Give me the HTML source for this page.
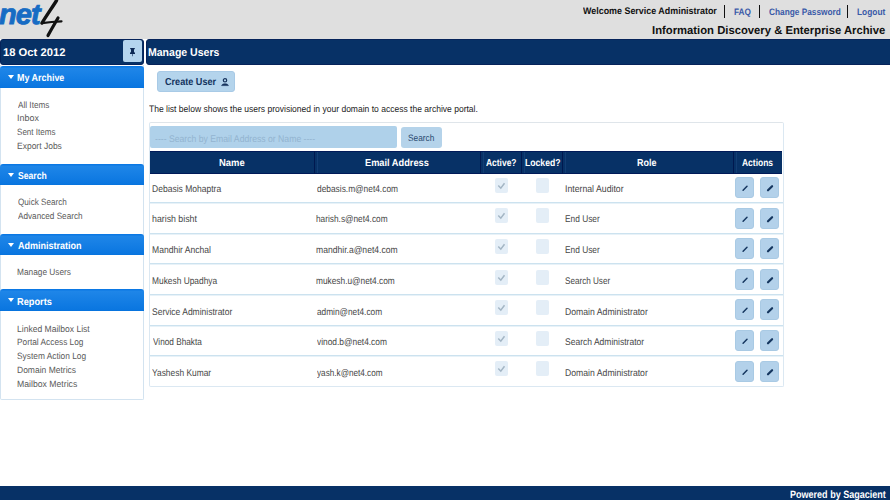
<!DOCTYPE html>
<html><head><meta charset="utf-8">
<style>
*{margin:0;padding:0;box-sizing:border-box}
html,body{width:890px;height:500px;overflow:hidden;background:#fff;font-family:"Liberation Sans",sans-serif;position:relative;text-rendering:geometricPrecision}
.a{position:absolute}
.t{position:absolute;white-space:nowrap;transform-origin:0 0}
</style></head><body>
<div class="a" style="left:0;top:0;width:890px;height:39px;background:#dfdfdf"></div>
<svg class="a" style="left:0;top:0" width="70" height="39" viewBox="0 0 70 39">
<text x="-1" y="24" font-family="Liberation Sans" font-weight="bold" font-style="italic" font-size="29" fill="#176cc4" stroke="#176cc4" stroke-width="0.9" letter-spacing="-0.9">net</text>
<path d="M56.5,0.5 C52.5,7 46.5,15.5 42,23" stroke="#111" stroke-width="3.4" fill="none" stroke-linecap="round"/>
<path d="M42,23.2 C48,22.2 55,21.5 61.5,21.3" stroke="#111" stroke-width="2.2" fill="none" stroke-linecap="round"/>
<path d="M58,18 C54.5,24 51,30 48,35.5" stroke="#111" stroke-width="3.2" fill="none" stroke-linecap="round"/>
</svg>
<div class="a" style="left:724px;top:5px;width:1px;height:13px;background:#111"></div>
<div class="a" style="left:759px;top:5px;width:1px;height:13px;background:#111"></div>
<div class="a" style="left:847px;top:5px;width:1px;height:13px;background:#111"></div>
<div class="a" style="left:0;top:39px;width:144px;height:25.5px;background:#073166;border:1px solid #06235a;border-radius:3px"></div>
<div class="a" style="left:123px;top:40px;width:19px;height:22px;background:#b4d5ee;border-radius:2px"></div>
<svg class="a" style="left:129px;top:47px" width="7" height="10" viewBox="0 0 7 10"><path d="M1.2,1 h4.6 v1.2 h-0.8 v2.6 l1,1.1 v1 h-2.2 v2.4 h-0.6 v-2.4 h-2.2 v-1 l1,-1.1 v-2.6 h-0.8z" fill="#0d2a55"/></svg>
<div class="a" style="left:146px;top:39px;width:750px;height:26px;background:#073166;border:1px solid #06235a;border-radius:3px"></div>
<div class="a" style="left:0;top:65px;width:144px;height:335px;border:1px solid #d3e3f0;border-top:none;border-radius:0 0 2px 2px"></div>
<div class="a" style="left:0;top:66px;width:144px;height:21.5px;background:linear-gradient(#0b78e4 0,#0b78e4 1px,#1f86e8 2px,#0a76e0 95%,#0672dc);border-radius:3px 3px 0 0"></div>
<div class="a" style="left:7.5px;top:75px;width:0;height:0;border-left:3px solid transparent;border-right:3px solid transparent;border-top:4px solid #fff"></div>
<div class="a" style="left:0;top:164px;width:144px;height:21px;background:linear-gradient(#0b78e4 0,#0b78e4 1px,#1f86e8 2px,#0a76e0 95%,#0672dc);border-radius:3px 3px 0 0"></div>
<div class="a" style="left:7.5px;top:173px;width:0;height:0;border-left:3px solid transparent;border-right:3px solid transparent;border-top:4px solid #fff"></div>
<div class="a" style="left:0;top:234px;width:144px;height:21px;background:linear-gradient(#0b78e4 0,#0b78e4 1px,#1f86e8 2px,#0a76e0 95%,#0672dc);border-radius:3px 3px 0 0"></div>
<div class="a" style="left:7.5px;top:243px;width:0;height:0;border-left:3px solid transparent;border-right:3px solid transparent;border-top:4px solid #fff"></div>
<div class="a" style="left:0;top:289px;width:144px;height:22px;background:linear-gradient(#0b78e4 0,#0b78e4 1px,#1f86e8 2px,#0a76e0 95%,#0672dc);border-radius:3px 3px 0 0"></div>
<div class="a" style="left:7.5px;top:298px;width:0;height:0;border-left:3px solid transparent;border-right:3px solid transparent;border-top:4px solid #fff"></div>
<div class="a" style="left:157px;top:71px;width:78px;height:21px;background:#b4d4ec;border:1px solid #a8cae6;border-radius:3px"></div>
<svg class="a" style="left:220px;top:77px" width="10" height="10" viewBox="0 0 10 10"><circle cx="5" cy="3.3" r="1.7" fill="none" stroke="#16325c" stroke-width="1.2"/><path d="M1.6,8.6 C2,6.2 8,6.2 8.4,8.6 Z" fill="#16325c" stroke="#16325c" stroke-width="0.6"/></svg>
<div class="a" style="left:149px;top:122px;width:635px;height:265px;border:1px solid #dbe8f2;border-top-color:#dfe5ea;border-radius:2px"></div>
<div class="a" style="left:150px;top:126px;width:247px;height:22px;background:#afd1ea;border-radius:2px"></div>
<div class="a" style="left:401px;top:127px;width:41px;height:21px;background:#b5d3ea;border-radius:3px"></div>
<div class="a" style="left:150px;top:151px;width:632px;height:23px;background:#073166;border-top:1px solid #001a58;border-bottom:1px solid #001a58"></div>
<div class="a" style="left:314px;top:151px;width:1px;height:23px;background:#00184f"></div>
<div class="a" style="left:317px;top:152px;width:1px;height:21px;background:#123d74"></div>
<div class="a" style="left:480px;top:151px;width:1px;height:23px;background:#00184f"></div>
<div class="a" style="left:483px;top:152px;width:1px;height:21px;background:#123d74"></div>
<div class="a" style="left:521px;top:151px;width:1px;height:23px;background:#00184f"></div>
<div class="a" style="left:524px;top:152px;width:1px;height:21px;background:#123d74"></div>
<div class="a" style="left:562px;top:151px;width:1px;height:23px;background:#00184f"></div>
<div class="a" style="left:565px;top:152px;width:1px;height:21px;background:#123d74"></div>
<div class="a" style="left:733px;top:151px;width:1px;height:23px;background:#00184f"></div>
<div class="a" style="left:736px;top:152px;width:1px;height:21px;background:#123d74"></div>
<div class="a" style="left:150px;top:202px;width:633px;height:1px;background:#cce2ef"></div>
<div class="a" style="left:150px;top:203px;width:633px;height:1px;background:#e8f2f8"></div>
<div class="a" style="left:150px;top:233px;width:633px;height:1px;background:#cce2ef"></div>
<div class="a" style="left:150px;top:234px;width:633px;height:1px;background:#e8f2f8"></div>
<div class="a" style="left:150px;top:263px;width:633px;height:1px;background:#cce2ef"></div>
<div class="a" style="left:150px;top:264px;width:633px;height:1px;background:#e8f2f8"></div>
<div class="a" style="left:150px;top:294px;width:633px;height:1px;background:#cce2ef"></div>
<div class="a" style="left:150px;top:295px;width:633px;height:1px;background:#e8f2f8"></div>
<div class="a" style="left:150px;top:325px;width:633px;height:1px;background:#cce2ef"></div>
<div class="a" style="left:150px;top:326px;width:633px;height:1px;background:#e8f2f8"></div>
<div class="a" style="left:150px;top:355px;width:633px;height:1px;background:#cce2ef"></div>
<div class="a" style="left:150px;top:356px;width:633px;height:1px;background:#e8f2f8"></div>
<div class="a" style="left:495px;top:178px;width:13px;height:15px;background:#e4eef7;border-radius:2px"></div>
<svg class="a" style="left:495px;top:178px" width="13" height="15" viewBox="0 0 13 15"><path d="M3.3,7.6 L5.8,10.2 L9.5,5.3" stroke="#a3b5c4" stroke-width="1.5" fill="none"/></svg>
<div class="a" style="left:536px;top:178px;width:13px;height:15px;background:#e4eef7;border-radius:2px"></div>
<div class="a" style="left:735px;top:177px;width:19px;height:21px;background:#b3d1ea;border:1px solid #a9cae4;border-radius:3px"></div>
<div class="a" style="left:760px;top:177px;width:19px;height:21px;background:#b3d1ea;border:1px solid #a9cae4;border-radius:3px"></div>
<svg class="a" style="left:735px;top:177px" width="19" height="21" viewBox="0 0 19 21"><path d="M8.1,13.2 L12,9.3" stroke="#15365f" stroke-width="1.5" stroke-linecap="round"/></svg>
<svg class="a" style="left:760px;top:177px" width="19" height="21" viewBox="0 0 19 21"><path d="M8,13.3 L12.1,9.2" stroke="#15365f" stroke-width="2.2" stroke-linecap="round"/></svg>
<div class="a" style="left:495px;top:208px;width:13px;height:15px;background:#e4eef7;border-radius:2px"></div>
<svg class="a" style="left:495px;top:208px" width="13" height="15" viewBox="0 0 13 15"><path d="M3.3,7.6 L5.8,10.2 L9.5,5.3" stroke="#a3b5c4" stroke-width="1.5" fill="none"/></svg>
<div class="a" style="left:536px;top:208px;width:13px;height:15px;background:#e4eef7;border-radius:2px"></div>
<div class="a" style="left:735px;top:208px;width:19px;height:21px;background:#b3d1ea;border:1px solid #a9cae4;border-radius:3px"></div>
<div class="a" style="left:760px;top:208px;width:19px;height:21px;background:#b3d1ea;border:1px solid #a9cae4;border-radius:3px"></div>
<svg class="a" style="left:735px;top:208px" width="19" height="21" viewBox="0 0 19 21"><path d="M8.1,13.2 L12,9.3" stroke="#15365f" stroke-width="1.5" stroke-linecap="round"/></svg>
<svg class="a" style="left:760px;top:208px" width="19" height="21" viewBox="0 0 19 21"><path d="M8,13.3 L12.1,9.2" stroke="#15365f" stroke-width="2.2" stroke-linecap="round"/></svg>
<div class="a" style="left:495px;top:239px;width:13px;height:15px;background:#e4eef7;border-radius:2px"></div>
<svg class="a" style="left:495px;top:239px" width="13" height="15" viewBox="0 0 13 15"><path d="M3.3,7.6 L5.8,10.2 L9.5,5.3" stroke="#a3b5c4" stroke-width="1.5" fill="none"/></svg>
<div class="a" style="left:536px;top:239px;width:13px;height:15px;background:#e4eef7;border-radius:2px"></div>
<div class="a" style="left:735px;top:238px;width:19px;height:21px;background:#b3d1ea;border:1px solid #a9cae4;border-radius:3px"></div>
<div class="a" style="left:760px;top:238px;width:19px;height:21px;background:#b3d1ea;border:1px solid #a9cae4;border-radius:3px"></div>
<svg class="a" style="left:735px;top:238px" width="19" height="21" viewBox="0 0 19 21"><path d="M8.1,13.2 L12,9.3" stroke="#15365f" stroke-width="1.5" stroke-linecap="round"/></svg>
<svg class="a" style="left:760px;top:238px" width="19" height="21" viewBox="0 0 19 21"><path d="M8,13.3 L12.1,9.2" stroke="#15365f" stroke-width="2.2" stroke-linecap="round"/></svg>
<div class="a" style="left:495px;top:270px;width:13px;height:15px;background:#e4eef7;border-radius:2px"></div>
<svg class="a" style="left:495px;top:270px" width="13" height="15" viewBox="0 0 13 15"><path d="M3.3,7.6 L5.8,10.2 L9.5,5.3" stroke="#a3b5c4" stroke-width="1.5" fill="none"/></svg>
<div class="a" style="left:536px;top:270px;width:13px;height:15px;background:#e4eef7;border-radius:2px"></div>
<div class="a" style="left:735px;top:269px;width:19px;height:21px;background:#b3d1ea;border:1px solid #a9cae4;border-radius:3px"></div>
<div class="a" style="left:760px;top:269px;width:19px;height:21px;background:#b3d1ea;border:1px solid #a9cae4;border-radius:3px"></div>
<svg class="a" style="left:735px;top:269px" width="19" height="21" viewBox="0 0 19 21"><path d="M8.1,13.2 L12,9.3" stroke="#15365f" stroke-width="1.5" stroke-linecap="round"/></svg>
<svg class="a" style="left:760px;top:269px" width="19" height="21" viewBox="0 0 19 21"><path d="M8,13.3 L12.1,9.2" stroke="#15365f" stroke-width="2.2" stroke-linecap="round"/></svg>
<div class="a" style="left:495px;top:300px;width:13px;height:15px;background:#e4eef7;border-radius:2px"></div>
<svg class="a" style="left:495px;top:300px" width="13" height="15" viewBox="0 0 13 15"><path d="M3.3,7.6 L5.8,10.2 L9.5,5.3" stroke="#a3b5c4" stroke-width="1.5" fill="none"/></svg>
<div class="a" style="left:536px;top:300px;width:13px;height:15px;background:#e4eef7;border-radius:2px"></div>
<div class="a" style="left:735px;top:299px;width:19px;height:21px;background:#b3d1ea;border:1px solid #a9cae4;border-radius:3px"></div>
<div class="a" style="left:760px;top:299px;width:19px;height:21px;background:#b3d1ea;border:1px solid #a9cae4;border-radius:3px"></div>
<svg class="a" style="left:735px;top:299px" width="19" height="21" viewBox="0 0 19 21"><path d="M8.1,13.2 L12,9.3" stroke="#15365f" stroke-width="1.5" stroke-linecap="round"/></svg>
<svg class="a" style="left:760px;top:299px" width="19" height="21" viewBox="0 0 19 21"><path d="M8,13.3 L12.1,9.2" stroke="#15365f" stroke-width="2.2" stroke-linecap="round"/></svg>
<div class="a" style="left:495px;top:331px;width:13px;height:15px;background:#e4eef7;border-radius:2px"></div>
<svg class="a" style="left:495px;top:331px" width="13" height="15" viewBox="0 0 13 15"><path d="M3.3,7.6 L5.8,10.2 L9.5,5.3" stroke="#a3b5c4" stroke-width="1.5" fill="none"/></svg>
<div class="a" style="left:536px;top:331px;width:13px;height:15px;background:#e4eef7;border-radius:2px"></div>
<div class="a" style="left:735px;top:330px;width:19px;height:21px;background:#b3d1ea;border:1px solid #a9cae4;border-radius:3px"></div>
<div class="a" style="left:760px;top:330px;width:19px;height:21px;background:#b3d1ea;border:1px solid #a9cae4;border-radius:3px"></div>
<svg class="a" style="left:735px;top:330px" width="19" height="21" viewBox="0 0 19 21"><path d="M8.1,13.2 L12,9.3" stroke="#15365f" stroke-width="1.5" stroke-linecap="round"/></svg>
<svg class="a" style="left:760px;top:330px" width="19" height="21" viewBox="0 0 19 21"><path d="M8,13.3 L12.1,9.2" stroke="#15365f" stroke-width="2.2" stroke-linecap="round"/></svg>
<div class="a" style="left:495px;top:361px;width:13px;height:15px;background:#e4eef7;border-radius:2px"></div>
<svg class="a" style="left:495px;top:361px" width="13" height="15" viewBox="0 0 13 15"><path d="M3.3,7.6 L5.8,10.2 L9.5,5.3" stroke="#a3b5c4" stroke-width="1.5" fill="none"/></svg>
<div class="a" style="left:536px;top:361px;width:13px;height:15px;background:#e4eef7;border-radius:2px"></div>
<div class="a" style="left:735px;top:361px;width:19px;height:21px;background:#b3d1ea;border:1px solid #a9cae4;border-radius:3px"></div>
<div class="a" style="left:760px;top:361px;width:19px;height:21px;background:#b3d1ea;border:1px solid #a9cae4;border-radius:3px"></div>
<svg class="a" style="left:735px;top:361px" width="19" height="21" viewBox="0 0 19 21"><path d="M8.1,13.2 L12,9.3" stroke="#15365f" stroke-width="1.5" stroke-linecap="round"/></svg>
<svg class="a" style="left:760px;top:361px" width="19" height="21" viewBox="0 0 19 21"><path d="M8,13.3 L12.1,9.2" stroke="#15365f" stroke-width="2.2" stroke-linecap="round"/></svg>
<div class="a" style="left:0;top:486px;width:890px;height:14px;background:#073166"></div>
<div class="t" style="left:583.00px;top:7px;font-size:9.59px;line-height:9.59px;font-weight:bold;color:#111;transform:scaleX(0.931)">Welcome Service Administrator</div>
<div class="t" style="left:734.11px;top:8px;font-size:9.3px;line-height:9.3px;font-weight:bold;color:#3a5aa8;transform:scaleX(0.889)">FAQ</div>
<div class="t" style="left:768.70px;top:8px;font-size:9.3px;line-height:9.3px;font-weight:bold;color:#3a5aa8;transform:scaleX(0.891)">Change Password</div>
<div class="t" style="left:857.10px;top:8px;font-size:9.3px;line-height:9.3px;font-weight:bold;color:#3a5aa8;transform:scaleX(0.897)">Logout</div>
<div class="t" style="left:652.22px;top:26px;font-size:11.48px;line-height:11.48px;font-weight:bold;color:#111;transform:scaleX(0.983)">Information Discovery &amp; Enterprise Archive</div>
<div class="t" style="left:2.50px;top:48px;font-size:11.19px;line-height:11.19px;font-weight:bold;color:#fff;transform:scaleX(1.003)">18 Oct 2012</div>
<div class="t" style="left:147.66px;top:48px;font-size:11.19px;line-height:11.19px;font-weight:bold;color:#fff;transform:scaleX(0.941)">Manage Users</div>
<div class="t" style="left:17.41px;top:74px;font-size:10.03px;line-height:10.03px;font-weight:bold;color:#fff;transform:scaleX(0.892)">My Archive</div>
<div class="t" style="left:18.30px;top:172px;font-size:10.03px;line-height:10.03px;font-weight:bold;color:#fff;transform:scaleX(0.858)">Search</div>
<div class="t" style="left:18.30px;top:242px;font-size:10.03px;line-height:10.03px;font-weight:bold;color:#fff;transform:scaleX(0.900)">Administration</div>
<div class="t" style="left:17.38px;top:298px;font-size:10.03px;line-height:10.03px;font-weight:bold;color:#fff;transform:scaleX(0.922)">Reports</div>
<div class="t" style="left:18.30px;top:101px;font-size:9.16px;line-height:9.16px;font-weight:normal;color:#5a5a5a;transform:scaleX(0.894)">All Items</div>
<div class="t" style="left:17.32px;top:114px;font-size:9.16px;line-height:9.16px;font-weight:normal;color:#5a5a5a;transform:scaleX(0.976)">Inbox</div>
<div class="t" style="left:17.42px;top:128px;font-size:9.16px;line-height:9.16px;font-weight:normal;color:#5a5a5a;transform:scaleX(0.881)">Sent Items</div>
<div class="t" style="left:17.37px;top:142px;font-size:9.16px;line-height:9.16px;font-weight:normal;color:#5a5a5a;transform:scaleX(0.928)">Export Jobs</div>
<div class="t" style="left:18.30px;top:198px;font-size:9.16px;line-height:9.16px;font-weight:normal;color:#5a5a5a;transform:scaleX(0.889)">Quick Search</div>
<div class="t" style="left:18.30px;top:212px;font-size:9.16px;line-height:9.16px;font-weight:normal;color:#5a5a5a;transform:scaleX(0.893)">Advanced Search</div>
<div class="t" style="left:17.39px;top:268px;font-size:9.16px;line-height:9.16px;font-weight:normal;color:#5a5a5a;transform:scaleX(0.907)">Manage Users</div>
<div class="t" style="left:17.37px;top:325px;font-size:9.16px;line-height:9.16px;font-weight:normal;color:#5a5a5a;transform:scaleX(0.934)">Linked Mailbox List</div>
<div class="t" style="left:17.39px;top:338px;font-size:9.16px;line-height:9.16px;font-weight:normal;color:#5a5a5a;transform:scaleX(0.907)">Portal Access Log</div>
<div class="t" style="left:17.39px;top:352px;font-size:9.16px;line-height:9.16px;font-weight:normal;color:#5a5a5a;transform:scaleX(0.912)">System Action Log</div>
<div class="t" style="left:17.37px;top:366px;font-size:9.16px;line-height:9.16px;font-weight:normal;color:#5a5a5a;transform:scaleX(0.929)">Domain Metrics</div>
<div class="t" style="left:17.35px;top:380px;font-size:9.16px;line-height:9.16px;font-weight:normal;color:#5a5a5a;transform:scaleX(0.947)">Mailbox Metrics</div>
<div class="t" style="left:165.20px;top:78px;font-size:10.17px;line-height:10.17px;font-weight:bold;color:#13335e;transform:scaleX(0.896)">Create User</div>
<div class="t" style="left:148.78px;top:105px;font-size:9.3px;line-height:9.3px;font-weight:normal;color:#222;transform:scaleX(0.917)">The list below shows the users provisioned in your domain to access the archive portal.</div>
<div class="t" style="left:155.00px;top:135px;font-size:9.74px;line-height:9.74px;font-weight:normal;color:#93b4d0;transform:scaleX(0.889)">---- Search by Email Address or Name ----</div>
<div class="t" style="left:407.91px;top:134px;font-size:9.3px;line-height:9.3px;font-weight:normal;color:#2a4a70;transform:scaleX(0.893)">Search</div>
<div class="t" style="left:218.76px;top:159px;font-size:10.03px;line-height:10.03px;font-weight:bold;color:#fff;transform:scaleX(0.942)">Name</div>
<div class="t" style="left:364.78px;top:159px;font-size:10.03px;line-height:10.03px;font-weight:bold;color:#fff;transform:scaleX(0.922)">Email Address</div>
<div class="t" style="left:486.00px;top:159px;font-size:10.03px;line-height:10.03px;font-weight:bold;color:#fff;transform:scaleX(0.844)">Active?</div>
<div class="t" style="left:524.64px;top:159px;font-size:10.03px;line-height:10.03px;font-weight:bold;color:#fff;transform:scaleX(0.863)">Locked?</div>
<div class="t" style="left:637.40px;top:159px;font-size:10.03px;line-height:10.03px;font-weight:bold;color:#fff;transform:scaleX(0.895)">Role</div>
<div class="t" style="left:741.70px;top:159px;font-size:10.03px;line-height:10.03px;font-weight:bold;color:#fff;transform:scaleX(0.846)">Actions</div>
<div class="t" style="left:152.12px;top:185px;font-size:9.74px;line-height:9.74px;font-weight:normal;color:#474747;transform:scaleX(0.876)">Debasis Mohaptra</div>
<div class="t" style="left:317.30px;top:185px;font-size:9.74px;line-height:9.74px;font-weight:normal;color:#474747;transform:scaleX(0.859)">debasis.m@net4.com</div>
<div class="t" style="left:565.30px;top:185px;font-size:9.74px;line-height:9.74px;font-weight:normal;color:#474747;transform:scaleX(0.895)">Internal Auditor</div>
<div class="t" style="left:152.10px;top:215px;font-size:9.74px;line-height:9.74px;font-weight:normal;color:#474747;transform:scaleX(0.902)">harish bisht</div>
<div class="t" style="left:316.45px;top:215px;font-size:9.74px;line-height:9.74px;font-weight:normal;color:#474747;transform:scaleX(0.852)">harish.s@net4.com</div>
<div class="t" style="left:565.34px;top:215px;font-size:9.74px;line-height:9.74px;font-weight:normal;color:#474747;transform:scaleX(0.856)">End User</div>
<div class="t" style="left:152.12px;top:246px;font-size:9.74px;line-height:9.74px;font-weight:normal;color:#474747;transform:scaleX(0.879)">Mandhir Anchal</div>
<div class="t" style="left:316.42px;top:246px;font-size:9.74px;line-height:9.74px;font-weight:normal;color:#474747;transform:scaleX(0.881)">mandhir.a@net4.com</div>
<div class="t" style="left:565.34px;top:246px;font-size:9.74px;line-height:9.74px;font-weight:normal;color:#474747;transform:scaleX(0.856)">End User</div>
<div class="t" style="left:152.14px;top:277px;font-size:9.74px;line-height:9.74px;font-weight:normal;color:#474747;transform:scaleX(0.860)">Mukesh Upadhya</div>
<div class="t" style="left:316.45px;top:277px;font-size:9.74px;line-height:9.74px;font-weight:normal;color:#474747;transform:scaleX(0.855)">mukesh.u@net4.com</div>
<div class="t" style="left:565.37px;top:277px;font-size:9.74px;line-height:9.74px;font-weight:normal;color:#474747;transform:scaleX(0.834)">Search User</div>
<div class="t" style="left:152.13px;top:308px;font-size:9.74px;line-height:9.74px;font-weight:normal;color:#474747;transform:scaleX(0.873)">Service Administrator</div>
<div class="t" style="left:317.30px;top:308px;font-size:9.74px;line-height:9.74px;font-weight:normal;color:#474747;transform:scaleX(0.851)">admin@net4.com</div>
<div class="t" style="left:565.31px;top:308px;font-size:9.74px;line-height:9.74px;font-weight:normal;color:#474747;transform:scaleX(0.890)">Domain Administrator</div>
<div class="t" style="left:153.00px;top:338px;font-size:9.74px;line-height:9.74px;font-weight:normal;color:#474747;transform:scaleX(0.845)">Vinod Bhakta</div>
<div class="t" style="left:317.30px;top:338px;font-size:9.74px;line-height:9.74px;font-weight:normal;color:#474747;transform:scaleX(0.860)">vinod.b@net4.com</div>
<div class="t" style="left:565.32px;top:338px;font-size:9.74px;line-height:9.74px;font-weight:normal;color:#474747;transform:scaleX(0.876)">Search Administrator</div>
<div class="t" style="left:152.14px;top:369px;font-size:9.74px;line-height:9.74px;font-weight:normal;color:#474747;transform:scaleX(0.863)">Yashesh Kumar</div>
<div class="t" style="left:317.30px;top:369px;font-size:9.74px;line-height:9.74px;font-weight:normal;color:#474747;transform:scaleX(0.840)">yash.k@net4.com</div>
<div class="t" style="left:565.31px;top:369px;font-size:9.74px;line-height:9.74px;font-weight:normal;color:#474747;transform:scaleX(0.890)">Domain Administrator</div>
<div class="t" style="left:790.15px;top:490px;font-size:10.61px;line-height:10.61px;font-weight:bold;color:#fff;transform:scaleX(0.851)">Powered by Sagacient</div>
</body></html>
